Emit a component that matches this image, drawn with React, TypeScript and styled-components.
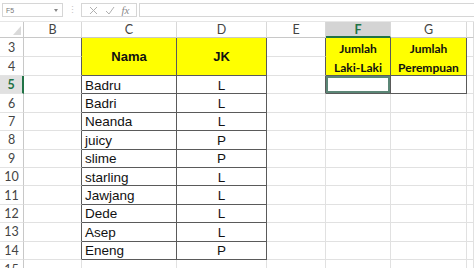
import React from 'react';
import styled, { createGlobalStyle } from 'styled-components';

type Edge = 'grid' | 'dark' | 'head';

const edgeColor = (e?: Edge) =>
  e === 'dark' ? '#5a5a5a' : e === 'head' ? '#c8c8c8' : '#e1e1e1';

const GlobalStyle = createGlobalStyle`
  html, body {
    margin: 0;
    padding: 0;
    background: #fff;
    overflow: hidden;
  }
`;

const Window = styled.div`
  width: 474px;
  height: 268px;
  overflow: hidden;
  background: #fff;
  font-family: "Liberation Sans", Arial, sans-serif;
`;

const FormulaBar = styled.div`
  box-sizing: border-box;
  height: 22px;
  display: flex;
  align-items: flex-start;
  padding: 3px 0 0 2px;
  border-bottom: 1px solid #e6e6e6;
`;

const NameBox = styled.div`
  box-sizing: border-box;
  width: 61px;
  height: 14px;
  border: 1px solid #d6d6d6;
  display: flex;
  align-items: center;
  justify-content: space-between;
  padding: 0 4px 0 3px;
  font-family: "Liberation Sans", Arial, sans-serif;
  font-size: 7px;
  color: #777;
`;

const DropArrow = styled.span`
  width: 0;
  height: 0;
  border-left: 2px solid transparent;
  border-right: 2px solid transparent;
  border-top: 3px solid #888;
`;

const Grip = styled.span`
  margin: 0 4px 0 5px;
  font-size: 9px;
  line-height: 14px;
  color: #c4c4c4;
`;

const FxBox = styled.div`
  box-sizing: border-box;
  width: 56px;
  height: 14px;
  border: 1px solid #d6d6d6;
  display: flex;
  align-items: center;
  justify-content: space-around;
  padding: 0 3px;
  color: #a8a8a8;
`;

const Fx = styled.span`
  font-family: "Liberation Serif", "Times New Roman", serif;
  font-style: italic;
  font-size: 11px;
  line-height: 12px;
  color: #8a8a8a;
`;

const FormulaInput = styled.div`
  box-sizing: border-box;
  flex: 1;
  height: 14px;
  margin-left: 2px;
  border: 1px solid #d6d6d6;
  border-right: none;
`;

const Sheet = styled.div`
  display: grid;
  grid-template-columns: 24px 58px 95px 90px 59px 65px 76px 1fr;
  grid-template-rows: 16px 19px 19px repeat(10, 18.4px) 20px;
`;

const Corner = styled.div`
  box-sizing: border-box;
  border-right: 1px solid #c8c8c8;
  border-bottom: 1px solid #c8c8c8;
  display: flex;
  align-items: flex-end;
  justify-content: flex-end;
  padding: 0 2px 2px 0;
`;

const CornerMark = styled.div`
  width: 0;
  height: 0;
  border-left: 8px solid transparent;
  border-bottom: 9px solid #dadada;
`;

const ColHead = styled.div<{ $active?: boolean }>`
  box-sizing: border-box;
  display: flex;
  align-items: center;
  justify-content: center;
  background: ${p => (p.$active ? '#d4d4d4' : '#fff')};
  border-right: 1px solid #d8d8d8;
  border-bottom: ${p => (p.$active ? '2px solid #217346' : '1px solid #c8c8c8')};
  font-family: Lato, "Liberation Sans", sans-serif;
  font-size: 12.5px;
  font-weight: ${p => (p.$active ? 700 : 400)};
  color: ${p => (p.$active ? '#217346' : '#444')};
`;

const RowHead = styled.div<{ $active?: boolean }>`
  box-sizing: border-box;
  display: flex;
  align-items: center;
  justify-content: center;
  background: ${p => (p.$active ? '#e1e1e1' : '#fff')};
  border-right: ${p => (p.$active ? '2px solid #217346' : '1px solid #c8c8c8')};
  border-bottom: 1px solid #e3e3e3;
  font-family: Lato, "Liberation Sans", sans-serif;
  font-size: 12.5px;
  font-weight: ${p => (p.$active ? 700 : 400)};
  color: ${p => (p.$active ? '#217346' : '#444')};
`;

const Cell = styled.div<{
  $right?: Edge;
  $bottom?: Edge;
  $center?: boolean;
  $selected?: boolean;
}>`
  box-sizing: border-box;
  display: flex;
  align-items: center;
  justify-content: ${p => (p.$center ? 'center' : 'flex-start')};
  padding: 1px 3px 0;
  overflow: hidden;
  white-space: nowrap;
  background: #fff;
  border-right: 1px solid ${p => edgeColor(p.$right)};
  border-bottom: 1px solid ${p => edgeColor(p.$bottom)};
  box-shadow: ${p => (p.$selected ? 'inset 0 0 0 2px #5b8676' : 'none')};
  font-size: 13.5px;
  color: #111;
`;

const TitleCell = styled.div<{ $rows?: number }>`
  box-sizing: border-box;
  grid-row: span ${p => p.$rows ?? 2};
  display: flex;
  align-items: center;
  justify-content: center;
  background: #ffff00;
  border-right: 1px solid #5a5a5a;
  border-bottom: 1px solid #5a5a5a;
  font-size: 13px;
  font-weight: 700;
  color: #111;
`;

const SumTitle = styled(TitleCell)`
  flex-direction: column;
  padding-top: 2px;
  font-family: Lato, "Open Sans", sans-serif;
  font-size: 12px;
  line-height: 19px;
`;

const people: [string, string][] = [
  ['Badru', 'L'],
  ['Badri', 'L'],
  ['Neanda', 'L'],
  ['juicy', 'P'],
  ['slime', 'P'],
  ['starling', 'L'],
  ['Jawjang', 'L'],
  ['Dede', 'L'],
  ['Asep', 'L'],
  ['Eneng', 'P'],
];

const columns = ['B', 'C', 'D', 'E', 'F', 'G', ''];

const App: React.FC = () => {
  return (
    <Window>
      <GlobalStyle />
      <FormulaBar>
        <NameBox>
          F5
          <DropArrow />
        </NameBox>
        <Grip>⋮</Grip>
        <FxBox>
          <svg width="9" height="9" viewBox="0 0 9 9">
            <path d="M1 1L8 8M8 1L1 8" stroke="#b0b0b0" strokeWidth="1" fill="none" />
          </svg>
          <svg width="10" height="9" viewBox="0 0 10 9">
            <path d="M1 5L4 8L9 1" stroke="#b0b0b0" strokeWidth="1" fill="none" />
          </svg>
          <Fx>fx</Fx>
        </FxBox>
        <FormulaInput />
      </FormulaBar>

      <Sheet>
        <Corner>
          <CornerMark />
        </Corner>
        {columns.map(c => (
          <ColHead key={c || 'H'} $active={c === 'F'}>
            {c}
          </ColHead>
        ))}

        {/* row 3 */}
        <RowHead>3</RowHead>
        <Cell $right="dark" />
        <TitleCell>Nama</TitleCell>
        <TitleCell>JK</TitleCell>
        <Cell $right="dark" />
        <SumTitle>
          <span>Jumlah</span>
          <span>Laki-Laki</span>
        </SumTitle>
        <SumTitle>
          <span>Jumlah</span>
          <span>Perempuan</span>
        </SumTitle>
        <Cell />

        {/* row 4 */}
        <RowHead>4</RowHead>
        <Cell $right="dark" />
        <Cell $right="dark" />
        <Cell />

        {people.map(([name, jk], i) => {
          const row = i + 5;
          const first = row === 5;
          return (
            <React.Fragment key={row}>
              <RowHead $active={first}>{row}</RowHead>
              <Cell $right="dark" />
              <Cell $right="dark" $bottom="dark">
                {name}
              </Cell>
              <Cell $right="dark" $bottom="dark" $center>
                {jk}
              </Cell>
              <Cell $right={first ? 'dark' : 'grid'} />
              <Cell $right={first ? 'dark' : 'grid'} $bottom={first ? 'dark' : 'grid'} $selected={first} />
              <Cell $right={first ? 'dark' : 'grid'} $bottom={first ? 'dark' : 'grid'} />
              <Cell />
            </React.Fragment>
          );
        })}

        {/* row 15 */}
        <RowHead>15</RowHead>
        {columns.map(c => (
          <Cell key={'r15' + c} />
        ))}
      </Sheet>
    </Window>
  );
};

export default App;
